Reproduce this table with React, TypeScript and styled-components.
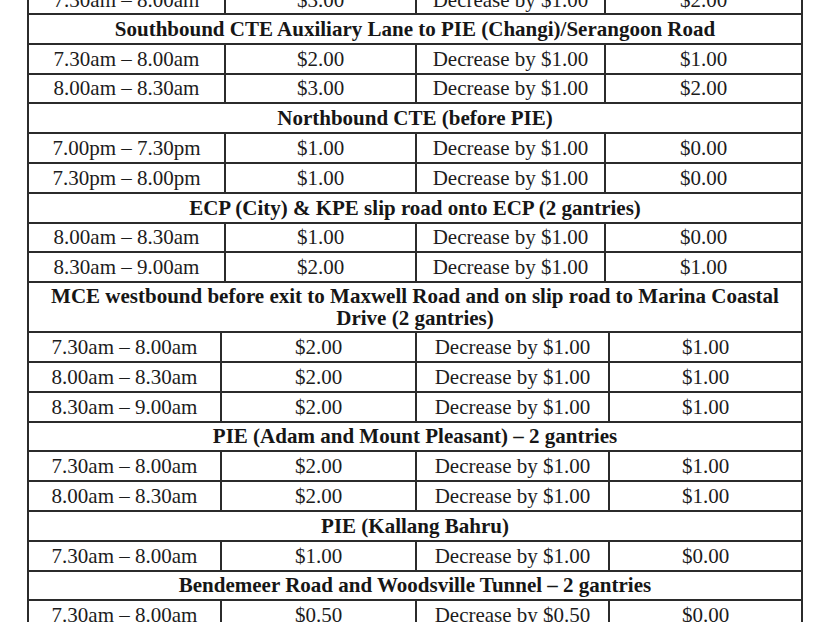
import styled, { createGlobalStyle } from "styled-components";

const GlobalStyle = createGlobalStyle`
	html, body {
		margin: 0;
		padding: 0;
		background: #ffffff;
		overflow: hidden;
	}
	body {
		font-family: "Liberation Serif", "Times New Roman", serif;
		color: #1c1c1c;
	}
`;

type Layout = "a" | "b";

const columns: Record<Layout, string> = {
	a: "195px 191px 189px 1fr",
	b: "191px 195px 193px 1fr",
};

const ROW_H = 29.8;
const LINE = "2px solid #2b2b2b";

const Sheet = styled.div`
	width: 776px;
	margin: -14.8px 0 0 27px;
`;

const Row = styled.div<{ $layout: Layout }>`
	display: grid;
	grid-template-columns: ${(p) => columns[p.$layout]};
	height: ${ROW_H}px;
	box-sizing: border-box;
	border-left: ${LINE};
	border-right: ${LINE};
	border-bottom: ${LINE};
	font-size: 21px;

	&:first-child {
		border-top: ${LINE};
	}
`;

const Cell = styled.div`
	display: flex;
	align-items: center;
	justify-content: center;
	padding-top: 1px;
	white-space: nowrap;

	& + & {
		border-left: ${LINE};
	}
`;

const Title = styled.div<{ $tall?: boolean }>`
	display: flex;
	align-items: center;
	justify-content: center;
	height: ${(p) => (p.$tall ? "50px" : `${ROW_H}px`)};
	box-sizing: border-box;
	padding: 0 12px;
	border-left: ${LINE};
	border-right: ${LINE};
	border-bottom: ${LINE};
	font-size: 21px;
	font-weight: bold;
	line-height: 22px;
	text-align: center;
	color: #161616;
`;

type Section = {
	title?: string;
	tall?: boolean;
	layout: Layout;
	rows: [string, string, string, string][];
};

const sections: Section[] = [
	{
		layout: "a",
		rows: [["7.30am – 8.00am", "$3.00", "Decrease by $1.00", "$2.00"]],
	},
	{
		title: "Southbound CTE Auxiliary Lane to PIE (Changi)/Serangoon Road",
		layout: "a",
		rows: [
			["7.30am – 8.00am", "$2.00", "Decrease by $1.00", "$1.00"],
			["8.00am – 8.30am", "$3.00", "Decrease by $1.00", "$2.00"],
		],
	},
	{
		title: "Northbound CTE (before PIE)",
		layout: "a",
		rows: [
			["7.00pm – 7.30pm", "$1.00", "Decrease by $1.00", "$0.00"],
			["7.30pm – 8.00pm", "$1.00", "Decrease by $1.00", "$0.00"],
		],
	},
	{
		title: "ECP (City) & KPE slip road onto ECP (2 gantries)",
		layout: "a",
		rows: [
			["8.00am – 8.30am", "$1.00", "Decrease by $1.00", "$0.00"],
			["8.30am – 9.00am", "$2.00", "Decrease by $1.00", "$1.00"],
		],
	},
	{
		title:
			"MCE westbound before exit to Maxwell Road and on slip road to Marina Coastal Drive (2 gantries)",
		tall: true,
		layout: "b",
		rows: [
			["7.30am – 8.00am", "$2.00", "Decrease by $1.00", "$1.00"],
			["8.00am – 8.30am", "$2.00", "Decrease by $1.00", "$1.00"],
			["8.30am – 9.00am", "$2.00", "Decrease by $1.00", "$1.00"],
		],
	},
	{
		title: "PIE (Adam and Mount Pleasant) – 2 gantries",
		layout: "b",
		rows: [
			["7.30am – 8.00am", "$2.00", "Decrease by $1.00", "$1.00"],
			["8.00am – 8.30am", "$2.00", "Decrease by $1.00", "$1.00"],
		],
	},
	{
		title: "PIE (Kallang Bahru)",
		layout: "b",
		rows: [["7.30am – 8.00am", "$1.00", "Decrease by $1.00", "$0.00"]],
	},
	{
		title: "Bendemeer Road and Woodsville Tunnel – 2 gantries",
		layout: "b",
		rows: [["7.30am – 8.00am", "$0.50", "Decrease by $0.50", "$0.00"]],
	},
];

export default function App() {
	return (
		<>
			<GlobalStyle />
			<Sheet>
				{sections.map((section, i) => [
					section.title ? (
						<Title key={`t${i}`} $tall={section.tall}>
							{section.title}
						</Title>
					) : null,
					...section.rows.map((row, j) => (
						<Row key={`r${i}-${j}`} $layout={section.layout}>
							{row.map((text, k) => (
								<Cell key={k}>{text}</Cell>
							))}
						</Row>
					)),
				])}
			</Sheet>
		</>
	);
}
